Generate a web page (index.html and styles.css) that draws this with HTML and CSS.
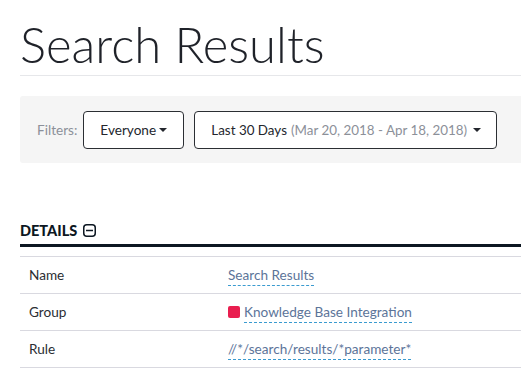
FILE: index.html
```html
<!DOCTYPE html>
<html>
<head>
<meta charset="utf-8">
<link rel="stylesheet" href="styles.css">
</head>
<body>
<div class="page">
  <h1 class="title">Search Results</h1>
  <div class="filters">
    <span class="filters-label">Filters:</span>
    <button class="dropdown dropdown-who">Everyone<span class="caret"></span></button>
    <button class="dropdown dropdown-date">Last 30 Days <span class="muted">(Mar 20, 2018 - Apr 18, 2018)</span><span class="caret caret-wide"></span></button>
  </div>
  <section class="details">
    <h2 class="details-head">DETAILS
      <svg class="collapse-icon" width="13" height="13" viewBox="0 0 13 13"><rect x="0.75" y="0.75" width="11.5" height="11.5" rx="3" fill="none" stroke="#0d1722" stroke-width="1.5"/><line x1="3" y1="6.5" x2="10" y2="6.5" stroke="#0d1722" stroke-width="1.5"/></svg>
    </h2>
    <div class="rows">
      <div class="row"><div class="label">Name</div><div class="value"><span class="link">Search Results</span></div></div>
      <div class="row"><div class="label">Group</div><div class="value"><span class="swatch"></span><span class="link">Knowledge Base Integration</span></div></div>
      <div class="row"><div class="label">Rule</div><div class="value"><span class="link">//*/search/results/*parameter*</span></div></div>
    </div>
  </section>
</div>
</body>
</html>
```
FILE: styles.css
```css
html, body {
  margin: 0;
  padding: 0;
  background: #ffffff;
  overflow: hidden;
}
body {
  font-family: Lato, "Open Sans", sans-serif;
  color: #2b2e33;
}
.page {
  width: 620px;
  padding-left: 20px;
}
.title {
  margin: 0;
  padding-top: 16px;
  height: 59px;
  box-sizing: content-box;
  font-size: 49px;
  line-height: 56px;
  font-weight: 300;
  color: #1f2229;
  border-bottom: 1px solid #e6e7ea;
}
.filters {
  margin-top: 20px;
  height: 67px;
  background: #f5f5f5;
  border-radius: 3px;
  display: flex;
  align-items: center;
  padding-left: 17px;
}
.filters-label {
  font-size: 13.6px;
  color: #8c9099;
  margin-right: 6px;
}
.dropdown {
  height: 38px;
  background: #ffffff;
  border: 1px solid #2b2e33;
  border-radius: 4px;
  font-family: inherit;
  font-size: 13.6px;
  color: #23262d;
  display: flex;
  align-items: center;
  padding: 0 0 0 16px;
}
.dropdown-who {
  width: 101px;
}
.dropdown-date {
  width: 303px;
  margin-left: 10px;
  font-size: 13.4px;
}
.muted {
  color: #8c9099;
  margin-left: 4px;
}
.caret {
  width: 0;
  height: 0;
  border-left: 4px solid transparent;
  border-right: 4px solid transparent;
  border-top: 4px solid #23262d;
  margin-left: 3px;
  margin-top: 1px;
}
.caret-wide {
  margin-left: 6px;
}
.details {
  margin-top: 56px;
}
.details-head {
  margin: 0;
  font-size: 14.5px;
  font-weight: 900;
  color: #0d1722;
  display: flex;
  align-items: center;
  gap: 6px;
  height: 22px;
  padding-bottom: 3px;
  border-bottom: 3px solid #0d1722;
}
.rows {
  margin-top: 9px;
  border-top: 1px solid #d9d9e0;
}
.row {
  display: flex;
  align-items: center;
  height: 36px;
  border-bottom: 1px solid #d9d9e0;
  font-size: 13.6px;
}
.label {
  width: 199px;
  padding-left: 9px;
  color: #2b2e33;
}
.value {
  display: flex;
  align-items: center;
}
.link {
  color: #5c7499;
  border-bottom: 1px dashed #3a9bd0;
  padding-bottom: 2px;
  margin-top: 3px;
}
.swatch {
  width: 12px;
  height: 12px;
  border-radius: 2px;
  background: #e91e4f;
  margin-right: 4px;
}
```
